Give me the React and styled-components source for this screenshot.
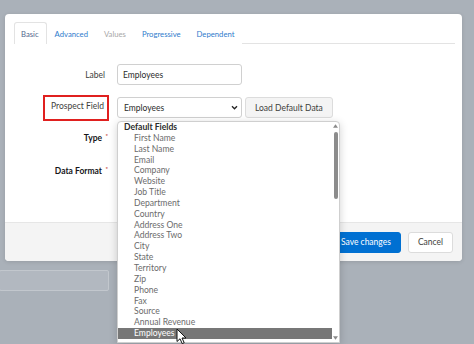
import React from 'react';
import styled, { createGlobalStyle } from 'styled-components';

const tabs = [
  { name: 'Basic', active: true },
  { name: 'Advanced' },
  { name: 'Values', disabled: true },
  { name: 'Progressive' },
  { name: 'Dependent' },
];

const fields = [
  'First Name',
  'Last Name',
  'Email',
  'Company',
  'Website',
  'Job Title',
  'Department',
  'Country',
  'Address One',
  'Address Two',
  'City',
  'State',
  'Territory',
  'Zip',
  'Phone',
  'Fax',
  'Source',
  'Annual Revenue',
  'Employees',
];

const App = () => {
  return (
    <>
      <GlobalStyle />
      <Screen>
        <Modal>
          <Body>
            <Tabs>
              {tabs.map((t) => (
                <Tab key={t.name} $active={t.active} $disabled={t.disabled}>
                  {t.name}
                </Tab>
              ))}
            </Tabs>
            <Form>
              <FieldLabel>Label</FieldLabel>
              <Controls>
                <Input>Employees</Input>
              </Controls>

              <FieldLabel $boxed>Prospect Field</FieldLabel>
              <Controls>
                <SelectWrap>
                  <Select>
                    <span>Employees</span>
                    <Chevron viewBox='0 0 8 6'>
                      <path d='M1 1.5 L4 4.5 L7 1.5' fill='none' stroke='#222' strokeWidth='1.6' />
                    </Chevron>
                  </Select>
                  <Menu>
                    <List>
                      <Group>Default Fields</Group>
                      {fields.map((f) => (
                        <Item key={f} $selected={f === 'Employees'}>
                          {f}
                        </Item>
                      ))}
                    </List>
                    <Scrollbar>
                      <Arrow viewBox='0 0 6 4'>
                        <path d='M0 4 L3 0 L6 4 Z' fill='#8a8a8a' />
                      </Arrow>
                      <Track>
                        <Thumb />
                      </Track>
                      <Arrow viewBox='0 0 6 4'>
                        <path d='M0 0 L3 4 L6 0 Z' fill='#8a8a8a' />
                      </Arrow>
                    </Scrollbar>
                  </Menu>
                </SelectWrap>
                <Button>Load Default Data</Button>
              </Controls>

              <FieldLabel $bold $required>
                Type
              </FieldLabel>
              <Controls />

              <FieldLabel $bold $required>
                Data Format
              </FieldLabel>
              <Controls />
            </Form>
          </Body>
          <Footer>
            <Button $primary>Save changes</Button>
            <Button $plain>Cancel</Button>
          </Footer>
        </Modal>
        <PageField />
        <Cursor viewBox='0 0 12 17'>
          <path
            d='M1 1 L1 13.5 L4 10.8 L6.2 15.6 L8.2 14.7 L6 10 L10 10 Z'
            fill='#fff'
            stroke='#111'
            strokeWidth='1'
            strokeLinejoin='round'
          />
        </Cursor>
      </Screen>
    </>
  );
};

const GlobalStyle = createGlobalStyle`
  body {
    margin: 0;
    font-family: Lato, "Open Sans", sans-serif;
    font-size: 8.5px;
    color: #3e3e3c;
  }
`;

const Screen = styled.div`
  position: relative;
  width: 474px;
  height: 344px;
  overflow: hidden;
  background: #aab1b9;
  padding: 14px 0 0 5px;
  box-sizing: border-box;
`;

const Modal = styled.div`
  width: 457px;
  height: 247px;
  display: flex;
  flex-direction: column;
  background: #fff;
  border-radius: 4px;
  box-shadow: 0 1px 4px rgba(0, 0, 0, 0.12);
`;

const Body = styled.div`
  flex: 1;
  padding: 8px 7px 0 9px;
`;

const Tabs = styled.div`
  display: flex;
  height: 21px;
  border-bottom: 1px solid #e3e3e3;
`;

const Tab = styled.div`
  display: flex;
  align-items: center;
  padding: 0 7px;
  font-size: 7.7px;
  color: ${(p) => (p.$disabled ? '#a8a8a8' : p.$active ? '#54698d' : '#2f7bcc')};
  border: 1px solid ${(p) => (p.$active ? '#e3e3e3' : 'transparent')};
  border-bottom: none;
  border-radius: 3px 3px 0 0;
  background: #fff;
  margin-bottom: -1px;
  ${(p) => p.$active && 'padding: 0 7px 0 6px;'}
`;

const Form = styled.div`
  display: grid;
  grid-template-columns: 95px 1fr;
  grid-auto-rows: 21px;
  column-gap: 8px;
  row-gap: 12px;
  margin-top: 20px;
`;

const FieldLabel = styled.div`
  display: flex;
  align-items: ${(p) => (p.$required ? 'flex-start' : 'center')};
  justify-content: flex-end;
  position: relative;
  white-space: nowrap;
  padding-right: ${(p) => (p.$required ? '7px' : '4px')};
  padding-top: ${(p) => (p.$required ? '3px' : '0')};
  font-weight: ${(p) => (p.$bold ? 700 : 400)};
  color: ${(p) => (p.$bold ? '#16161a' : '#3e3e3c')};
  ${(p) =>
    p.$boxed &&
    `
    justify-self: end;
    width: 66px;
    height: 26px;
    margin: -2px 0 -3px;
    box-sizing: border-box;
    border: 2px solid #e0201f;
    padding-right: 3px;
    padding-bottom: 4px;
  `}
  &::after {
    content: ${(p) => (p.$required ? "'*'" : 'none')};
    position: absolute;
    right: 1px;
    top: 2px;
    font-size: 6px;
    color: #c23934;
  }
`;

const Controls = styled.div`
  display: flex;
  align-items: stretch;
  gap: 3px;
`;

const Input = styled.div`
  width: 125px;
  box-sizing: border-box;
  display: flex;
  align-items: center;
  padding-left: 5px;
  border: 1px solid #d0d0d0;
  border-radius: 3px;
  color: #2b2b2b;
`;

const SelectWrap = styled.div`
  position: relative;
  width: 125px;
  z-index: 2;
`;

const Select = styled.div`
  height: 100%;
  box-sizing: border-box;
  display: flex;
  align-items: center;
  justify-content: space-between;
  padding: 0 3px 0 6px;
  border: 1px solid #d0d0d0;
  border-radius: 3px;
  color: #2b2b2b;
`;

const Chevron = styled.svg`
  width: 7px;
  height: 5px;
`;

const Menu = styled.div`
  position: absolute;
  top: calc(100% + 3px);
  left: 0;
  width: 223px;
  height: 222px;
  display: flex;
  background: #fff;
  border: 1px solid #cfcfcf;
  border-radius: 4px 4px 0 0;
  box-sizing: border-box;
  box-shadow: 0 2px 8px rgba(0, 0, 0, 0.18);
  overflow: hidden;
`;

const List = styled.div`
  flex: 1;
  line-height: 10.85px;
  font-size: 8.6px;
`;

const Group = styled.div`
  padding-left: 6px;
  font-weight: 700;
  color: #2b2b2b;
`;

const Item = styled.div`
  padding-left: 16px;
  color: ${(p) => (p.$selected ? '#fff' : '#6b6b6b')};
  background: ${(p) => (p.$selected ? '#777' : 'transparent')};
`;

const Scrollbar = styled.div`
  width: 7px;
  display: flex;
  flex-direction: column;
  align-items: center;
  padding: 2px 0;
  box-sizing: border-box;
`;

const Arrow = styled.svg`
  width: 5px;
  height: 4px;
  flex: none;
`;

const Track = styled.div`
  flex: 1;
  padding-top: 4px;
`;

const Thumb = styled.div`
  width: 4px;
  height: 67px;
  border-radius: 2px;
  background: #8c8c8c;
`;

const Button = styled.div`
  display: flex;
  align-items: center;
  height: 21px;
  box-sizing: border-box;
  padding: 0 9px;
  border-radius: 3px;
  font-size: 8.5px;
  white-space: nowrap;
  border: 1px solid ${(p) => (p.$primary ? '#0070d2' : '#dcdcdc')};
  background: ${(p) => (p.$primary ? '#0070d2' : p.$plain ? '#fff' : '#f4f4f4')};
  color: ${(p) => (p.$primary ? '#fff' : '#3e3e3c')};
`;

const Footer = styled.div`
  height: 38px;
  display: flex;
  align-items: center;
  justify-content: flex-end;
  gap: 7px;
  padding-right: 9px;
  background: #f4f4f4;
  border-top: 1px solid #e6e6e6;
  border-radius: 0 0 4px 4px;
`;

const PageField = styled.div`
  width: 108px;
  height: 19px;
  margin: 9px 0 0 -6px;
  border: 1px solid #c2c7cd;
  border-radius: 2px;
  background: #b2b8c0;
`;

const Cursor = styled.svg`
  position: absolute;
  left: 176px;
  top: 328px;
  width: 12px;
  height: 17px;
  z-index: 5;
`;

export default App;
